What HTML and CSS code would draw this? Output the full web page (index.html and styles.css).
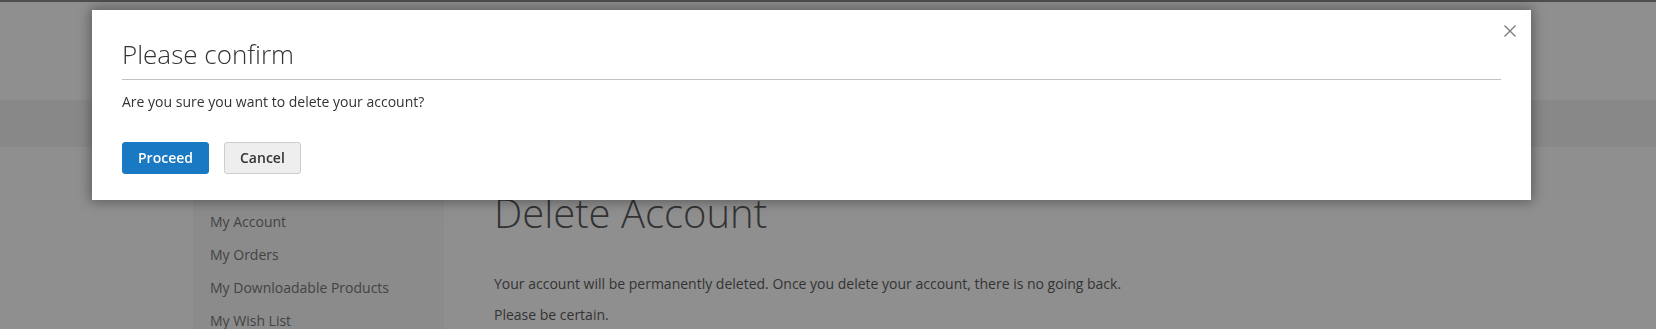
FILE: index.html
```html
<!DOCTYPE html>
<html lang="en">
<head>
  <meta charset="UTF-8">
  <meta name="viewport" content="width=device-width, initial-scale=1.0">
  <title>Delete Account</title>
  <link rel="stylesheet" href="styles.css">
</head>
<body>
  <div class="panel"></div>
  <header class="header"></header>
  <nav class="navbar"></nav>

  <main class="columns">
    <aside class="sidebar">
      <ul class="nav">
        <li><a href="#">My Account</a></li>
        <li><a href="#">My Orders</a></li>
        <li><a href="#">My Downloadable Products</a></li>
        <li><a href="#">My Wish List</a></li>
      </ul>
    </aside>
    <section class="content">
      <h1 class="page-title">Delete Account</h1>
      <p>Your account will be permanently deleted. Once you delete your account, there is no going back.</p>
      <p>Please be certain.</p>
    </section>
  </main>

  <div class="overlay">
    <div class="modal">
      <button class="action-close" aria-label="Close">
        <svg width="12" height="12" viewBox="0 0 12 12">
          <path d="M0.5 0.5 L11.5 11.5 M11.5 0.5 L0.5 11.5" stroke="#7a7a7a" stroke-width="1.3" fill="none"/>
        </svg>
      </button>
      <div class="modal-header">
        <h2 class="modal-title">Please confirm</h2>
      </div>
      <div class="modal-content">
        Are you sure you want to delete your account?
      </div>
      <div class="modal-footer">
        <button class="btn btn-primary">Proceed</button>
        <button class="btn btn-secondary">Cancel</button>
      </div>
    </div>
  </div>
</body>
</html>
```

FILE: styles.css
```css
body {
  font-family: "Open Sans", "Noto Sans", Arial, sans-serif;
  font-size: 14px;
  line-height: 20px;
  color: #333;
  margin: 0;
  padding: 0;
  background: #ffffff;
  overflow: hidden;
  height: 329px;
}
.panel {
  height: 2px;
  background: #6e716e;
}
.header {
  height: 98px;
  background: #ffffff;
}
.navbar {
  height: 47px;
  background: #f0f0f0;
}
.columns {
  display: flex;
  max-width: 1270px;
  margin: 0 auto;
  padding-top: 44px;
}
.sidebar {
  width: 251px;
  flex-shrink: 0;
  background: #f5f5f5;
  padding: 15px 0 0;
}
.nav {
  list-style: none;
  margin: 0;
  padding: 0;
}
.nav li a {
  display: block;
  padding: 6px 0 7px 17px;
  color: #575757;
  text-decoration: none;
}
.content {
  padding-left: 50px;
  flex: 1;
}
.page-title {
  font-size: 40px;
  font-weight: 300;
  line-height: 44px;
  margin: 0 0 39px;
}
.content p {
  margin: 0 0 11px;
}
.overlay {
  position: fixed;
  top: 0;
  left: 0;
  right: 0;
  bottom: 0;
  background: rgba(51, 51, 51, 0.55);
}
.modal {
  position: relative;
  width: 1439px;
  margin: 10px 0 0 92px;
  background: #ffffff;
  box-shadow: 0 0 12px 2px rgba(0, 0, 0, 0.35);
  box-sizing: border-box;
  padding: 0 30px 26px;
}
.action-close {
  position: absolute;
  top: 15px;
  right: 15px;
  width: 12px;
  height: 12px;
  padding: 0;
  border: none;
  background: none;
  cursor: pointer;
  line-height: 0;
}
.modal-header {
  padding-top: 30px;
}
.modal-title {
  font-size: 26px;
  font-weight: 300;
  line-height: 28.6px;
  margin: 0;
  padding-bottom: 10px;
  border-bottom: 1px solid #c1c1c1;
}
.modal-content {
  padding-top: 12px;
}
.modal-footer {
  display: flex;
  gap: 15px;
  padding-top: 30px;
}
.btn {
  font-family: inherit;
  font-size: 14px;
  font-weight: 600;
  line-height: 16px;
  padding: 7px 15px;
  border-radius: 3px;
  cursor: pointer;
}
.btn-primary {
  background: #1979c3;
  border: 1px solid #1979c3;
  color: #ffffff;
}
.btn-secondary {
  background: #eeeeee;
  border: 1px solid #cdcdcd;
  color: #333;
}
```
